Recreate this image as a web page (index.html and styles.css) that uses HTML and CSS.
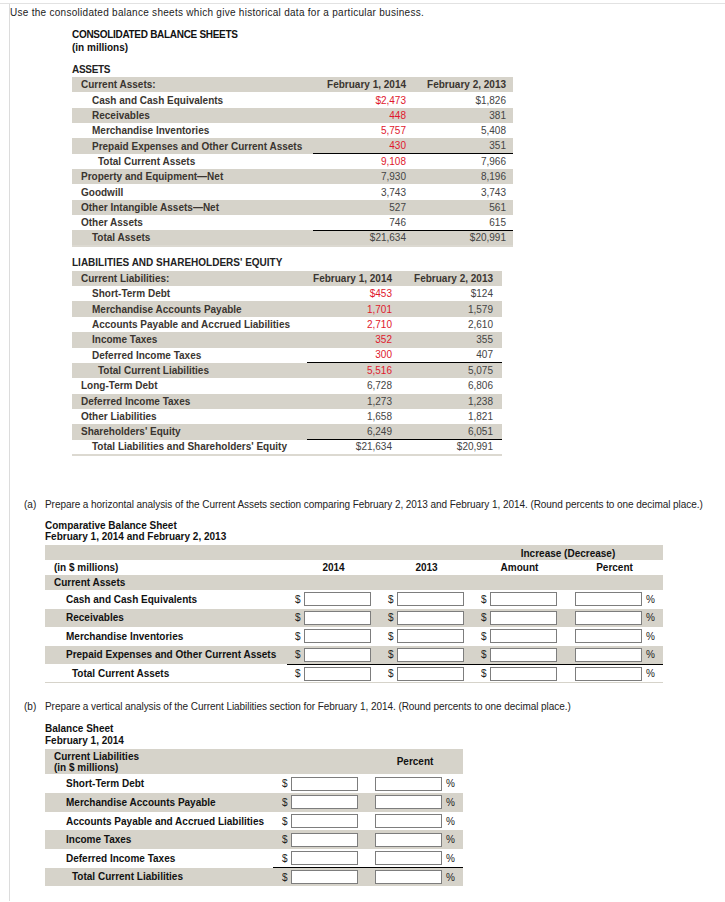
FILE: index.html
```html
<!DOCTYPE html>
<html>
<head>
<meta charset="utf-8">
<link rel="stylesheet" href="styles.css">
</head>
<body>
<div class="page">
  <div class="frame">
    <p class="intro">Use the consolidated balance sheets which give historical data for a particular business.</p>
    <div class="block1">
      <div class="title"><span class="caps">CONSOLIDATED BALANCE SHEETS</span><br>(in millions)</div>
      <div class="sec caps">ASSETS</div>
      <table class="bs bs1">
        <colgroup><col class="c-lab1"><col class="c-n1"><col class="c-n2"></colgroup>
        <tr class="g"><td class="l0">Current Assets:</td><td class="h">February 1, 2014</td><td class="h">February 2, 2013</td></tr>
        <tr><td class="l1">Cash and Cash Equivalents</td><td class="n red">$2,473</td><td class="n">$1,826</td></tr>
        <tr class="g"><td class="l1">Receivables</td><td class="n red">448</td><td class="n">381</td></tr>
        <tr><td class="l1">Merchandise Inventories</td><td class="n red">5,757</td><td class="n">5,408</td></tr>
        <tr class="g"><td class="l1">Prepaid Expenses and Other Current Assets</td><td class="n red">430</td><td class="n">351</td></tr>
        <tr class="tot"><td class="l2">Total Current Assets</td><td class="n red">9,108</td><td class="n">7,966</td></tr>
        <tr class="g"><td class="l0">Property and Equipment—Net</td><td class="n">7,930</td><td class="n">8,196</td></tr>
        <tr><td class="l0">Goodwill</td><td class="n">3,743</td><td class="n">3,743</td></tr>
        <tr class="g"><td class="l0">Other Intangible Assets—Net</td><td class="n">527</td><td class="n">561</td></tr>
        <tr><td class="l0">Other Assets</td><td class="n">746</td><td class="n">615</td></tr>
        <tr class="g tot"><td class="l1">Total Assets</td><td class="n">$21,634</td><td class="n">$20,991</td></tr>
      </table>
      <div class="sec sec2 caps">LIABILITIES AND SHAREHOLDERS' EQUITY</div>
      <table class="bs bs2">
        <colgroup><col class="c-lab2"><col class="c-m1"><col class="c-m2"></colgroup>
        <tr class="g"><td class="l0">Current Liabilities:</td><td class="h">February 1, 2014</td><td class="h">February 2, 2013</td></tr>
        <tr><td class="l1">Short-Term Debt</td><td class="n red">$453</td><td class="n">$124</td></tr>
        <tr class="g"><td class="l1">Merchandise Accounts Payable</td><td class="n red">1,701</td><td class="n">1,579</td></tr>
        <tr><td class="l1">Accounts Payable and Accrued Liabilities</td><td class="n red">2,710</td><td class="n">2,610</td></tr>
        <tr class="g"><td class="l1">Income Taxes</td><td class="n red">352</td><td class="n">355</td></tr>
        <tr><td class="l1">Deferred Income Taxes</td><td class="n red">300</td><td class="n">407</td></tr>
        <tr class="g tot"><td class="l2">Total Current Liabilities</td><td class="n red">5,516</td><td class="n">5,075</td></tr>
        <tr><td class="l0">Long-Term Debt</td><td class="n">6,728</td><td class="n">6,806</td></tr>
        <tr class="g"><td class="l0">Deferred Income Taxes</td><td class="n">1,273</td><td class="n">1,238</td></tr>
        <tr><td class="l0">Other Liabilities</td><td class="n">1,658</td><td class="n">1,821</td></tr>
        <tr class="g"><td class="l0">Shareholders' Equity</td><td class="n">6,249</td><td class="n">6,051</td></tr>
        <tr class="tot"><td class="l1">Total Liabilities and Shareholders' Equity</td><td class="n">$21,634</td><td class="n">$20,991</td></tr>
      </table>
    </div>

    <div class="part part-a">
      <div class="part-label">(a)</div>
      <div class="part-body">
        <p class="prompt">Prepare a horizontal analysis of the Current Assets section comparing February 2, 2013 and February 1, 2014. (Round percents to one decimal place.)</p>
        <div class="heading">Comparative Balance Sheet<br>February 1, 2014 and February 2, 2013</div>
        <table class="wk wka">
          <colgroup><col class="a-lab"><col class="a-c"><col class="a-c"><col class="a-c"><col class="a-p"></colgroup>
          <tr class="g hr"><td></td><td></td><td></td><td colspan="2" class="ch">Increase (Decrease)</td></tr>
          <tr class="hr"><td class="k0">(in $ millions)</td><td class="ch">2014</td><td class="ch">2013</td><td class="ch">Amount</td><td class="ch">Percent</td></tr>
          <tr class="g hr"><td class="k0">Current Assets</td><td></td><td></td><td></td><td></td></tr>
          <tr class="ir"><td class="k1">Cash and Cash Equivalents</td><td class="in"><span class="cur">$</span><input type="text"></td><td class="in"><span class="cur">$</span><input type="text"></td><td class="in"><span class="cur">$</span><input type="text"></td><td class="in pc"><input type="text"><span class="pct">%</span></td></tr>
          <tr class="g ir"><td class="k1">Receivables</td><td class="in"><span class="cur">$</span><input type="text"></td><td class="in"><span class="cur">$</span><input type="text"></td><td class="in"><span class="cur">$</span><input type="text"></td><td class="in pc"><input type="text"><span class="pct">%</span></td></tr>
          <tr class="ir"><td class="k1">Merchandise Inventories</td><td class="in"><span class="cur">$</span><input type="text"></td><td class="in"><span class="cur">$</span><input type="text"></td><td class="in"><span class="cur">$</span><input type="text"></td><td class="in pc"><input type="text"><span class="pct">%</span></td></tr>
          <tr class="g ir"><td class="k1">Prepaid Expenses and Other Current Assets</td><td class="in"><span class="cur">$</span><input type="text"></td><td class="in"><span class="cur">$</span><input type="text"></td><td class="in"><span class="cur">$</span><input type="text"></td><td class="in pc"><input type="text"><span class="pct">%</span></td></tr>
          <tr class="ir tot"><td class="k2">Total Current Assets</td><td class="in"><span class="cur">$</span><input type="text"></td><td class="in"><span class="cur">$</span><input type="text"></td><td class="in"><span class="cur">$</span><input type="text"></td><td class="in pc"><input type="text"><span class="pct">%</span></td></tr>
        </table>
      </div>
    </div>

    <div class="part part-b">
      <div class="part-label">(b)</div>
      <div class="part-body">
        <p class="prompt">Prepare a vertical analysis of the Current Liabilities section for February 1, 2014. (Round percents to one decimal place.)</p>
        <div class="heading heading-b">Balance Sheet<br>February 1, 2014</div>
        <table class="wk wkb">
          <colgroup><col class="b-lab"><col class="b-c"><col class="b-p"></colgroup>
          <tr class="g hb"><td class="k0 two">Current Liabilities<br>(in $ millions)</td><td></td><td class="ch">Percent</td></tr>
          <tr class="ir"><td class="k1">Short-Term Debt</td><td class="in"><span class="cur">$</span><input type="text"></td><td class="in pc"><input type="text"><span class="pct">%</span></td></tr>
          <tr class="g ir"><td class="k1">Merchandise Accounts Payable</td><td class="in"><span class="cur">$</span><input type="text"></td><td class="in pc"><input type="text"><span class="pct">%</span></td></tr>
          <tr class="ir"><td class="k1">Accounts Payable and Accrued Liabilities</td><td class="in"><span class="cur">$</span><input type="text"></td><td class="in pc"><input type="text"><span class="pct">%</span></td></tr>
          <tr class="g ir"><td class="k1">Income Taxes</td><td class="in"><span class="cur">$</span><input type="text"></td><td class="in pc"><input type="text"><span class="pct">%</span></td></tr>
          <tr class="ir"><td class="k1">Deferred Income Taxes</td><td class="in"><span class="cur">$</span><input type="text"></td><td class="in pc"><input type="text"><span class="pct">%</span></td></tr>
          <tr class="g ir tot"><td class="k2">Total Current Liabilities</td><td class="in"><span class="cur">$</span><input type="text"></td><td class="in pc"><input type="text"><span class="pct">%</span></td></tr>
        </table>
      </div>
    </div>
  </div>
</div>
</body>
</html>
```

FILE: styles.css
```css
html, body {
  margin: 0;
  padding: 0;
  background: #fff;
}
body {
  font-family: "Liberation Sans", Arial, sans-serif;
  font-size: 10px;
  color: #333;
}
.page {
  padding-top: 3px;
}
.frame {
  border-top: 1px solid #e2e2e2;
  position: relative;
  min-height: 898px;
  box-sizing: border-box;
  padding-left: 10px;
}
.frame::before {
  content: "";
  position: absolute;
  left: 9px;
  top: 0;
  bottom: 0;
  border-left: 1px solid #dcdcdc;
}
.intro {
  margin: 0;
  padding-top: 2px;
  font-size: 10px;
  letter-spacing: 0.28px;
  line-height: 14px;
  color: #222;
}
.block1 {
  margin-left: 62px;
}
.title {
  margin-top: 8px;
  line-height: 13px;
  font-weight: bold;
  color: #111;
}
.caps {
  letter-spacing: -0.3px;
}
.sec {
  margin-top: 9px;
  line-height: 13px;
  font-weight: bold;
  color: #222;
}
.sec2 {
  margin-top: 9px;
  letter-spacing: 0;
}
table {
  border-collapse: collapse;
  border-spacing: 0;
  table-layout: fixed;
}
td {
  padding: 0;
  white-space: nowrap;
}
.bs {
  margin-top: 1px;
  border-bottom: 2px solid #dcd9d1;
}
.bs2 {
  margin-top: 2px;
}
.bs tr {
  height: 15.35px;
}
.g {
  background: #d6d3ca;
}
.c-lab1 { width: 241px; }
.c-n1 { width: 101px; }
.c-n2 { width: 99px; }
.c-lab2 { width: 235px; }
.c-m1 { width: 94px; }
.c-m2 { width: 101px; }
.bs td {
  line-height: 13px;
}
.l0, .l1, .l2 {
  font-weight: bold;
  color: #3a3530;
}
.l0 { padding-left: 9px; }
.l1 { padding-left: 20px; }
.l2 { padding-left: 26px; }
.bs .h {
  text-align: right;
  font-weight: bold;
  color: #3a3530;
  padding-right: 8px;
}
.bs1 .h:last-child { padding-right: 7px; }
.bs2 .h { padding-right: 9px; }
.bs .n {
  text-align: right;
  color: #444;
  padding-right: 8px;
}
.bs1 .n:last-child { padding-right: 7px; }
.bs2 .n { padding-right: 9px; }
.bs .red {
  color: #e0182d;
}
.bs .tot .n {
  border-top: 1px solid #000;
}

.part {
  display: flex;
  padding-left: 14px;
  color: #222;
}
.part-a {
  margin-top: 42px;
}
.part-b {
  margin-top: 17px;
}
.part-label {
  width: 21px;
  flex: none;
  font-size: 10px;
  line-height: 14px;
}
.prompt {
  margin: 0;
  font-size: 10px;
  letter-spacing: -0.06px;
  line-height: 14px;
  white-space: nowrap;
}
.heading {
  margin-top: 8px;
  font-weight: bold;
  line-height: 11px;
  color: #111;
}
.heading-b {
  margin-top: 9px;
  line-height: 12px;
}
.wk {
  margin-top: 3px;
  color: #111;
}
.wkb {
  margin-top: 2px;
}
.wka {
  border-bottom: 1px solid #d6d3ca;
}
.a-lab { width: 242px; }
.a-c { width: 93px; }
.a-p { width: 97px; }
.b-lab { width: 228px; }
.b-c { width: 94px; }
.b-p { width: 96px; }
.wk .hr {
  height: 15px;
}
.wk .hb {
  height: 25px;
}
.wk .ir {
  height: 18.6px;
}
.wkb .ir {
  height: 18.67px;
}
.k0, .k1, .k2 {
  font-weight: bold;
  line-height: 13px;
}
.k0 { padding-left: 9px; }
.k1 { padding-left: 21px; }
.k2 { padding-left: 27px; }
.two {
  line-height: 11px;
}
.ch {
  text-align: center;
  font-weight: bold;
  line-height: 13px;
}
.wka .hr:first-child .ch {
  padding-top: 2px;
}
.in {
  padding-left: 8px;
  font-size: 0;
  vertical-align: middle;
}
.wkb .in {
  padding-left: 9px;
}
.wkb .in.pc {
  padding-left: 8px;
}
.wka .in.pc {
  padding-left: 9px;
}
.cur {
  display: inline-block;
  width: 9px;
  font-size: 10px;
  vertical-align: middle;
  color: #222;
}
.pct {
  display: inline-block;
  margin-left: 4px;
  font-size: 10px;
  vertical-align: middle;
  color: #222;
}
input {
  box-sizing: border-box;
  width: 67px;
  height: 14px;
  margin: 0;
  padding: 0 2px;
  border: 1px solid #7d7d7d;
  background: #fff;
  vertical-align: middle;
  font-size: 10px;
  font-family: "Liberation Sans", Arial, sans-serif;
}
.wk .tot td:not(:first-child) {
  border-top: 1px solid #000;
}
```
